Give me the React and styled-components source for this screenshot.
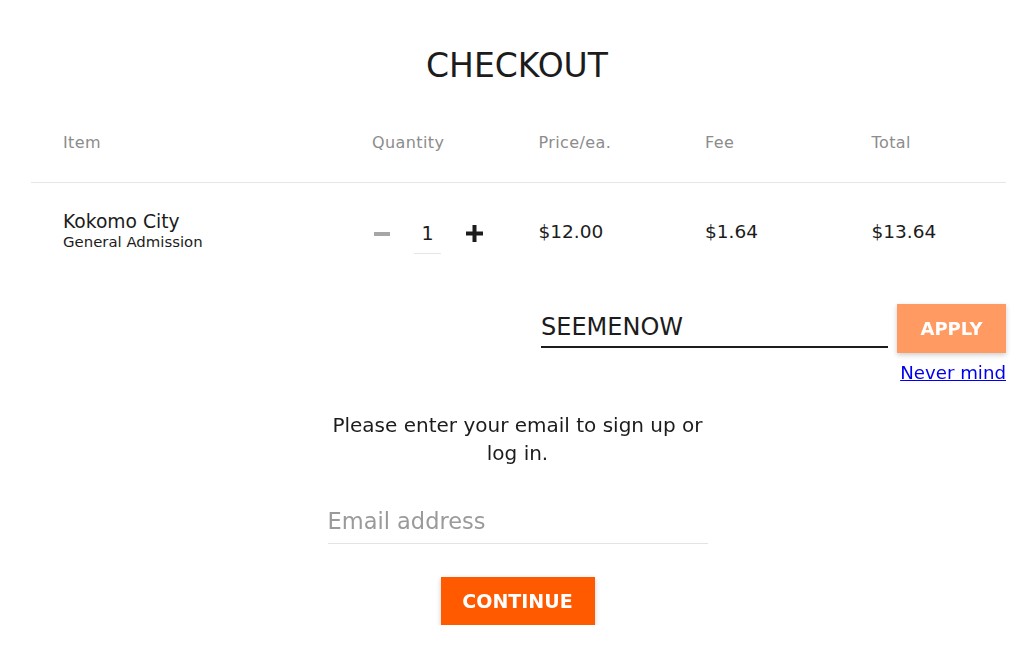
import React, { useState } from "react";
import styled, { createGlobalStyle } from "styled-components";

const GlobalStyle = createGlobalStyle`
  body {
    margin: 0;
    background: #ffffff;
    font-family: "DejaVu Sans", "Liberation Sans", Arial, sans-serif;
    color: #1c1c1c;
  }
`;

const Page = styled.div`
  width: 1034px;
  display: flex;
  flex-direction: column;
  align-items: center;
`;

const Title = styled.h1`
  margin: 46px 0 16px;
  font-size: 33px;
  line-height: 40px;
  font-weight: 400;
  color: #1c1c1c;
`;

const Table = styled.div`
  width: 975px;
  margin-left: 3px;
`;

const Row = styled.div`
  display: grid;
  grid-template-columns: 309px repeat(4, minmax(0, 1fr));
  align-items: center;
  border-bottom: ${(p) => (p.$head ? "1px solid #e6e6e6" : "none")};
`;

const HeadCell = styled.div`
  padding: 31px 32px 29px;
  font-size: 16px;
  letter-spacing: 0.4px;
  line-height: 20px;
  color: #8c8c8c;
`;

const Cell = styled.div`
  padding: ${(p) => (p.$qty ? "30px 32px" : "28px 32px 32px")};
  font-size: 18.5px;
  line-height: 20px;
  color: #1c1c1c;
  display: flex;
  flex-direction: column;
  white-space: nowrap;
`;

const ItemName = styled.span`
  font-size: 18.7px;
  line-height: 20px;
`;

const ItemSub = styled.span`
  font-size: 14.9px;
  line-height: 20px;
`;

const Qty = styled.div`
  display: flex;
  align-items: center;
  margin-left: 2px;
`;

const QtyBtn = styled.button`
  border: none;
  background: none;
  padding: 0;
  display: flex;
  align-items: center;
  justify-content: center;
  cursor: pointer;
`;

const QtyInput = styled.input`
  width: 27px;
  height: 40px;
  margin: 0 25px 0 24px;
  border: none;
  border-bottom: 1px solid #e6e6e6;
  font-family: inherit;
  font-size: 19px;
  color: #1c1c1c;
  text-align: center;
  padding: 0;
  outline: none;
`;

const Coupon = styled.div`
  width: 975px;
  margin-left: 3px;
  margin-top: 20px;
  display: flex;
  flex-direction: column;
  align-items: flex-end;
`;

const CouponRow = styled.div`
  display: flex;
  align-items: flex-start;
  gap: 9px;
`;

const CouponInput = styled.input`
  width: 347px;
  height: 38px;
  padding: 4px 0 0;
  border: none;
  border-bottom: 2px solid #1c1c1c;
  font-family: inherit;
  font-size: 24px;
  color: #1c1c1c;
  outline: none;
  caret-color: #1c1c1c;
`;

const Button = styled.button`
  border: none;
  background: ${(p) => p.$bg};
  color: #ffffff;
  font-family: inherit;
  font-size: ${(p) => p.$fs}px;
  font-weight: 700;
  width: ${(p) => p.$w}px;
  height: ${(p) => p.$h}px;
  padding: 0;
  box-shadow: 0 2px 5px rgba(0, 0, 0, 0.2);
  cursor: pointer;
`;

const Link = styled.a`
  margin-top: 10px;
  font-size: 18.2px;
  line-height: 20px;
  color: #0000ee;
  text-decoration: underline;
  cursor: pointer;
`;

const Login = styled.div`
  width: 380px;
  margin-top: 28px;
  margin-left: 1px;
  display: flex;
  flex-direction: column;
  align-items: center;
`;

const Prompt = styled.p`
  margin: 0;
  font-size: 20px;
  line-height: 28px;
  text-align: center;
  color: #1c1c1c;
`;

const EmailInput = styled.input`
  width: 380px;
  height: 44px;
  margin-top: 32px;
  padding: 0;
  border: none;
  border-bottom: 1px solid #e3e3e3;
  font-family: inherit;
  font-size: 22.5px;
  color: #1c1c1c;
  outline: none;
  &::placeholder {
    color: #9a9a9a;
  }
`;

const ButtonWrap = styled.div`
  margin-top: 33px;
`;

function Minus() {
  return (
    <svg width="16" height="4" viewBox="0 0 16 4">
      <rect width="16" height="4" fill="#a6a6a6" />
    </svg>
  );
}

function Plus() {
  return (
    <svg width="17" height="17" viewBox="0 0 17 17">
      <rect x="6.5" y="0" width="4" height="17" fill="#1c1c1c" />
      <rect x="0" y="6.5" width="17" height="4" fill="#1c1c1c" />
    </svg>
  );
}

export default function App() {
  const [qty, setQty] = useState(1);
  const [code, setCode] = useState("SEEMENOW");

  return (
    <Page>
      <GlobalStyle />
      <Title>CHECKOUT</Title>
      <Table>
        <Row $head>
          <HeadCell>Item</HeadCell>
          <HeadCell>Quantity</HeadCell>
          <HeadCell>Price/ea.</HeadCell>
          <HeadCell>Fee</HeadCell>
          <HeadCell>Total</HeadCell>
        </Row>
        <Row>
          <Cell>
            <ItemName>Kokomo City</ItemName>
            <ItemSub>General Admission</ItemSub>
          </Cell>
          <Cell $qty>
            <Qty>
              <QtyBtn onClick={() => setQty(Math.max(1, qty - 1))}>
                <Minus />
              </QtyBtn>
              <QtyInput value={qty} onChange={(e) => setQty(e.target.value)} />
              <QtyBtn onClick={() => setQty(qty + 1)}>
                <Plus />
              </QtyBtn>
            </Qty>
          </Cell>
          <Cell>$12.00</Cell>
          <Cell>$1.64</Cell>
          <Cell>$13.64</Cell>
        </Row>
      </Table>
      <Coupon>
        <CouponRow>
          <CouponInput
            autoFocus
            value={code}
            onChange={(e) => setCode(e.target.value)}
          />
          <Button $bg="#ff9a62" $w={109} $h={49} $fs={18}>
            APPLY
          </Button>
        </CouponRow>
        <Link>Never mind</Link>
      </Coupon>
      <Login>
        <Prompt>Please enter your email to sign up or log in.</Prompt>
        <EmailInput placeholder="Email address" />
        <ButtonWrap>
          <Button $bg="#ff5a00" $w={154} $h={48} $fs={19}>
            CONTINUE
          </Button>
        </ButtonWrap>
      </Login>
    </Page>
  );
}
